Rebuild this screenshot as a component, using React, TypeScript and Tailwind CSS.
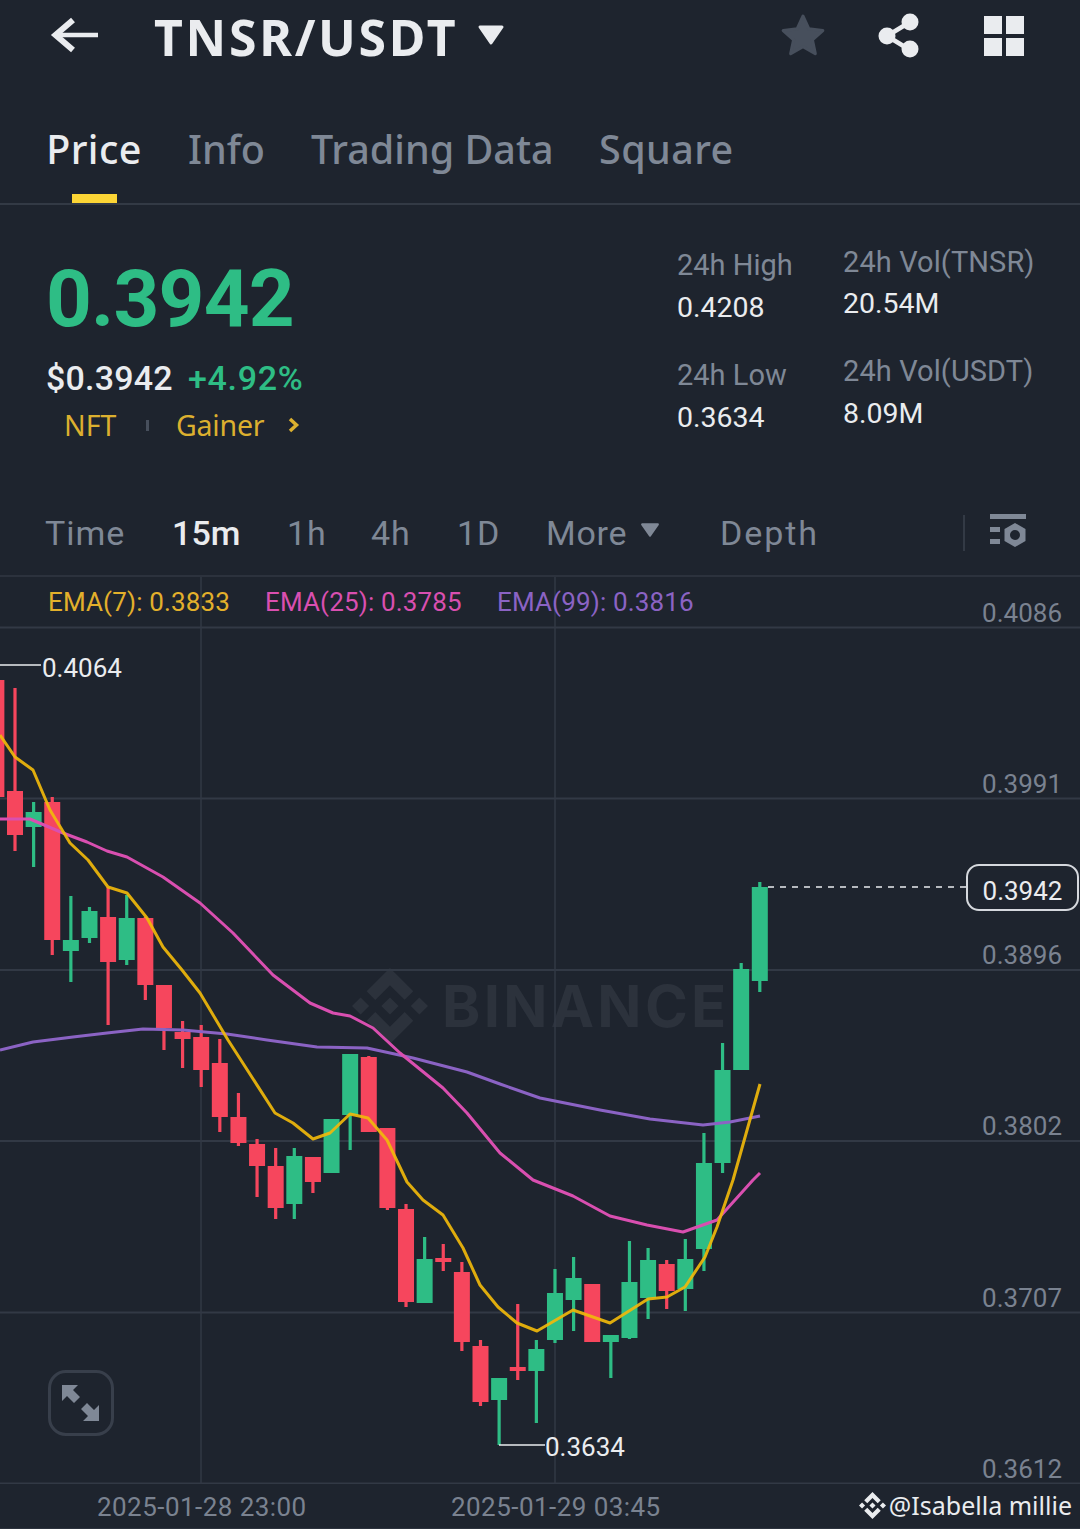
import React from "react";

const G = "#2ebd85";
const R = "#f6465d";
// [index, wickTop, wickBottom, bodyTop, bodyBottom, colour]
const candles: [number, number, number, number, number, string][] = [
  [-1, 678, 800, 680, 797, R],
  [0, 688, 851, 791, 835, R],
  [1, 802, 867, 812, 827, G],
  [2, 797, 955, 802, 940, R],
  [3, 896, 982, 940, 951, G],
  [4, 907, 943, 911, 938, G],
  [5, 887, 1025, 917, 962, R],
  [6, 895, 965, 918, 960, G],
  [7, 917, 1000, 918, 985, R],
  [8, 985, 1050, 985, 1028, R],
  [9, 1021, 1068, 1032, 1039, R],
  [10, 1025, 1087, 1037, 1070, R],
  [11, 1039, 1132, 1063, 1117, R],
  [12, 1093, 1146, 1117, 1143, R],
  [13, 1139, 1197, 1144, 1166, R],
  [14, 1148, 1219, 1166, 1208, R],
  [15, 1148, 1219, 1156, 1204, G],
  [16, 1157, 1193, 1157, 1182, R],
  [17, 1119, 1173, 1119, 1173, G],
  [18, 1054, 1150, 1054, 1115, G],
  [19, 1056, 1132, 1057, 1132, R],
  [20, 1128, 1210, 1128, 1208, R],
  [21, 1204, 1307, 1209, 1302, R],
  [22, 1237, 1303, 1259, 1303, G],
  [23, 1244, 1271, 1258, 1262, R],
  [24, 1262, 1351, 1272, 1342, R],
  [25, 1340, 1406, 1346, 1402, R],
  [26, 1378, 1445, 1378, 1400, G],
  [27, 1304, 1380, 1367, 1371, R],
  [28, 1340, 1423, 1349, 1371, G],
  [29, 1269, 1343, 1293, 1340, G],
  [30, 1257, 1331, 1278, 1300, G],
  [31, 1284, 1342, 1284, 1342, R],
  [32, 1335, 1378, 1335, 1342, G],
  [33, 1241, 1339, 1282, 1338, G],
  [34, 1248, 1319, 1260, 1298, G],
  [35, 1260, 1309, 1264, 1291, R],
  [36, 1239, 1311, 1259, 1289, G],
  [37, 1133, 1271, 1163, 1249, G],
  [38, 1043, 1173, 1070, 1163, G],
  [39, 963, 1070, 969, 1070, G],
  [40, 882, 992, 887, 981, G],
];

const ema7 =
  "0,735 15,757 33,770 50,810 70,843 88,860 108,887 127,893 147,918 163,947 182,970 200,993 228,1040 275,1113 293,1123 313,1139 330,1133 350,1114 368,1118 387,1140 407,1182 423,1200 443,1215 463,1248 480,1285 498,1307 517,1323 537,1331 573,1310 610,1323 648,1299 667,1297 685,1287 705,1257 717,1227 733,1180 760,1084";
const ema25 =
  "0,819 30,819 63,833 87,842 107,851 127,857 163,877 200,903 233,933 273,975 310,1003 333,1013 350,1016 373,1028 400,1053 443,1088 467,1113 500,1153 533,1180 573,1196 610,1216 647,1225 683,1232 717,1220 753,1180 760,1173";
const ema99 =
  "0,1050 33,1042 73,1037 107,1033 143,1029 183,1030 227,1034 267,1040 317,1047 367,1048 413,1058 467,1072 500,1084 540,1098 600,1110 650,1119 703,1125 730,1122 760,1116";

const BINANCE =
  "M16.624 13.9202l2.7175 2.7154-7.353 7.353-7.353-7.352 2.7175-2.7164 4.6355 4.6595 4.6356-4.6595zm4.6366-4.6366L24 12l-2.7154 2.7164L18.5682 12l2.6924-2.7164zm-9.272.001l2.7163 2.6914-2.7164 2.7174v-.001L9.2721 12l2.7164-2.7154zm-9.2722-.001L5.4088 12l-2.6914 2.6924L0 12l2.7164-2.7164zM11.9885.0115l7.353 7.329-2.7174 2.7154-4.6356-4.6356-4.6355 4.6595-2.7174-2.7154 7.353-7.353z";

function Caret({ className }: { className: string }) {
  return (
    <svg viewBox="0 0 28 22" className={className}>
      <path d="M3 3h22L14 19z" fill="currentColor" stroke="currentColor" strokeWidth="3" strokeLinejoin="round" />
    </svg>
  );
}

function Header() {
  return (
    <div className="flex h-[74px] items-center text-[#eaecef]">
      <svg viewBox="0 0 50 40" className="ml-[50px] h-[40px] w-[50px]">
        <path d="M23 3 5.500 18 23 33" fill="none" stroke="currentColor" strokeWidth="6" />
        <path d="M6 18h42" fill="none" stroke="currentColor" strokeWidth="4.500" />
      </svg>
      <span className="ml-[54px] w-[300px] text-[50px] font-bold leading-[60px] tracking-[2.700px] whitespace-nowrap font-['Noto_Sans',sans-serif]">
        TNSR/USDT
      </span>
      <Caret className="ml-[22px] mb-[4px] h-[22px] w-[30px]" />
      <svg viewBox="0 0 48 48" className="ml-[272px] mt-[-3px] h-[50px] w-[50px] text-[#474f5c]">
        <path
          d="M24 5l5.6 12.2 13.4 1.5-10 9 2.8 13.2L24 34.2 12.200 40.900 15 27.700l-10-9 13.400-1.500z"
          fill="currentColor"
          stroke="currentColor"
          strokeWidth="3"
          strokeLinejoin="round"
        />
      </svg>
      <svg viewBox="0 0 46 46" className="ml-[48px] mt-[-2px] h-[46px] w-[46px]">
        <path d="M11 23 34 9M11 23l23 14" stroke="currentColor" strokeWidth="4.500" fill="none" />
        <circle cx="11" cy="23" r="8.500" fill="currentColor" />
        <circle cx="34" cy="9" r="8.500" fill="currentColor" />
        <circle cx="34" cy="36" r="8.500" fill="currentColor" />
      </svg>
      <div className="ml-[62px] mt-[-2px] grid h-[40px] w-[40px] grid-cols-[18px_18px] grid-rows-[18px_18px] gap-[4px]">
        <div className="bg-[#eaecef]" />
        <div className="bg-[#eaecef]" />
        <div className="bg-[#eaecef]" />
        <div className="bg-[#eaecef]" />
      </div>
    </div>
  );
}

function Tabs() {
  return (
    <div className="flex h-[131px] items-end border-b-2 border-[#333a45] pl-[47px] text-[39.500px] leading-[48px] text-[#7f8896] font-['Noto_Sans',sans-serif]">
      <div className="flex w-[94px] flex-col items-center">
        <span className="mb-[21px] font-medium tracking-[0.400px] whitespace-nowrap text-[#eaecef]">Price</span>
        <div className="h-[9px] w-[45px] bg-[#fcd535]" />
      </div>
      <span className="mb-[30px] ml-[47px] w-[77px] whitespace-nowrap font-medium">Info</span>
      <span className="mb-[30px] ml-[46px] w-[242px] whitespace-nowrap font-medium">Trading Data</span>
      <span className="mb-[30px] ml-[46px] tracking-[0.400px] whitespace-nowrap font-medium">Square</span>
    </div>
  );
}

function Stats() {
  return (
    <div className="flex h-[285px] font-['Roboto',sans-serif]">
      <div className="w-[677px] pl-[46px]">
        <div className="mt-[54px] text-[80px] font-bold leading-[80px] tracking-[-0.800px] text-[#2ebd85]">0.3942</div>
        <div className="mt-[19px] flex items-center text-[34px] font-medium leading-[40px]">
          <span className="w-[142px] tracking-[0.200px] text-[#eaecef]">$0.3942</span>
          <span className="tracking-[0.700px] text-[#2ebd85]">+4.92%</span>
        </div>
        <div className="mt-[9px] flex items-center text-[28.500px] leading-[36px] text-[#dcb02f] font-['Noto_Sans',sans-serif]">
          <span className="ml-[18px] w-[82px]">NFT</span>
          <div className="h-[11px] w-[3px] bg-[#474f5c]" />
          <span className="ml-[27px] w-[112px] tracking-[-0.200px]">Gainer</span>
          <svg viewBox="0 0 12 16" className="h-[16px] w-[12px]">
            <path d="M2 2l6.500 6L2 14" fill="none" stroke="currentColor" strokeWidth="3.500" />
          </svg>
        </div>
      </div>
      <div className="w-[166px] pt-[40px] text-[29px] leading-[40px] text-[#eaecef]">
        <div className="text-[#7f8896]">24h High</div>
        <div className="mt-[3px] text-[28.500px]">0.4208</div>
        <div className="mt-[27px] text-[#7f8896]">24h Low</div>
        <div className="mt-[3px] text-[28.500px]">0.3634</div>
      </div>
      <div className="pt-[37px] text-[29px] leading-[40px] text-[#eaecef]">
        <div className="tracking-[0.100px] text-[#7f8896]">24h Vol(TNSR)</div>
        <div className="mt-[2px] text-[28.500px]">20.54M</div>
        <div className="mt-[27px] tracking-[0.100px] text-[#7f8896]">24h Vol(USDT)</div>
        <div className="mt-[3px] text-[28.500px]">8.09M</div>
      </div>
    </div>
  );
}

function Intervals() {
  return (
    <div className="flex h-[87px] items-center border-b-2 border-[#2c323d] pl-[45px] text-[34px] leading-[44px] text-[#7f8896] font-['Roboto',sans-serif]">
      <span className="w-[127px] tracking-[1px]">Time</span>
      <span className="w-[115px] font-medium tracking-[0.1px] text-[#eaecef]">15m</span>
      <span className="w-[84px] tracking-[1px]">1h</span>
      <span className="w-[86px] tracking-[1px]">4h</span>
      <span className="w-[89px] tracking-[1px]">1D</span>
      <span className="w-[94px] tracking-[0.7px]">More</span>
      <Caret className="h-[16px] w-[20px] mb-[6px]" />
      <span className="ml-[60px] w-[243px] tracking-[1.900px]">Depth</span>
      <div className="h-[36px] w-[2px] bg-[#333a45]" />
      <svg viewBox="0 0 38 38" className="ml-[24px] h-[38px] w-[38px] mb-[4px]">
        <path d="M1 2h36v5H1zM1 15h10v5H1zM1 27h10v5H1z" fill="currentColor" />
        <path fillRule="evenodd" d="M26 11l10.500 6v12L26 35l-10.500-6V17zM26 18a5 5 0 100 10 5 5 0 000-10z" fill="currentColor" />
      </svg>
    </div>
  );
}

function Chart() {
  return (
    <div className="relative h-[907px] overflow-hidden font-['Roboto',sans-serif]">
      {/* watermark */}
      <div className="absolute left-[352px] top-[391px] flex items-center text-[#2c323c]">
        <svg viewBox="0 0 24 24" className="h-[76px] w-[76px]">
          <path d={BINANCE} fill="currentColor" />
        </svg>
        <span className="ml-[14px] text-[58px] font-bold leading-[76px] tracking-[3.300px] font-['Inter',sans-serif]">BINANCE</span>
      </div>

      <svg viewBox="0 577 1080 907" className="absolute left-0 top-0 h-[907px] w-[1080px]">
        {[627.5, 798.5, 970, 1141, 1312.5, 1483.5].map((y) => (
          <line key={y} x1="0" x2="1080" y1={y} y2={y} stroke="#323945" strokeWidth="1.800" />
        ))}
        {[201, 555].map((x) => (
          <line key={x} x1={x} x2={x} y1="577" y2="1484" stroke="#323945" strokeWidth="1.500" />
        ))}
        {candles.map(([i, wt, wb, bt, bb, c]) => {
          const x = 15 + i * 18.62;
          return (
            <g key={i} fill={c}>
              <rect x={x - 1.6} y={wt} width="3.200" height={wb - wt} />
              <rect x={x - 8} y={bt} width="16" height={bb - bt} />
            </g>
          );
        })}
        <polyline points={ema99} fill="none" stroke="#8b63c4" strokeWidth="3" strokeLinejoin="round" />
        <polyline points={ema25} fill="none" stroke="#d94fb0" strokeWidth="3" strokeLinejoin="round" />
        <polyline points={ema7} fill="none" stroke="#f0b90b" strokeOpacity="0.92" strokeWidth="3" strokeLinejoin="round" />
        <line x1="0" x2="41" y1="665" y2="665" stroke="#eaecef" strokeWidth="1.500" />
        <path d="M499 1445h46" fill="none" stroke="#eaecef" strokeWidth="1.500" />
        <line x1="768" x2="967" y1="887" y2="887" stroke="#eaecef" strokeWidth="1.500" strokeDasharray="6 6" />
      </svg>

      {/* legend */}
      <div className="absolute left-[48px] top-[7px] flex text-[26px] leading-[36px] tracking-[0.150px] whitespace-nowrap">
        <span className="w-[217px] text-[#e3b02b]">EMA(7): 0.3833</span>
        <span className="w-[232px] text-[#d94fb0]">EMA(25): 0.3785</span>
        <span className="text-[#8b63c4]">EMA(99): 0.3816</span>
      </div>

      {/* price axis */}
      <span className="absolute right-[18px] top-[19px] text-[26px] leading-[34px] text-[#7a8290]">0.4086</span>
      <span className="absolute right-[18px] top-[190px] text-[26px] leading-[34px] text-[#7a8290]">0.3991</span>
      <span className="absolute right-[18px] top-[361px] text-[26px] leading-[34px] text-[#7a8290]">0.3896</span>
      <span className="absolute right-[18px] top-[532px] text-[26px] leading-[34px] text-[#7a8290]">0.3802</span>
      <span className="absolute right-[18px] top-[704px] text-[26px] leading-[34px] text-[#7a8290]">0.3707</span>
      <span className="absolute right-[18px] top-[875px] text-[26px] leading-[34px] text-[#7a8290]">0.3612</span>

      {/* last price */}
      <div className="absolute left-[966px] top-[287px] flex h-[47px] w-[113px] items-center justify-center rounded-[13px] border-2 border-[#d5d8dd] bg-[#1e242e] pt-[7px] text-[26px] leading-[34px] text-[#eaecef]">
        0.3942
      </div>

      {/* high / low */}
      <span className="absolute left-[42px] top-[74px] text-[26px] leading-[34px] text-[#eaecef]">0.4064</span>
      <span className="absolute left-[545px] top-[853px] text-[26px] leading-[34px] text-[#eaecef]">0.3634</span>

      {/* expand */}
      <div className="absolute left-[48px] top-[793px] flex h-[66px] w-[66px] items-center justify-center rounded-[18px] border-[3px] border-[#383f4b]">
        <svg viewBox="0 0 40 38" className="h-[38px] w-[40px] text-[#7f8896]">
          <path d="M1 1h16l-5 5 7 7-6 6-7-7-5 5zM38 37H22l5-5-7-7 6-6 7 7 5-5z" fill="currentColor" />
        </svg>
      </div>
    </div>
  );
}

function Axis() {
  return (
    <div className="relative h-[45px] border-b border-[#2c323d] font-['Roboto',sans-serif] text-[26px] leading-[46px] tracking-[0.450px] text-[#7a8290]">
      <div className="flex">
        <span className="ml-[97px] w-[354px] whitespace-nowrap">2025-01-28 23:00</span>
        <span className="whitespace-nowrap">2025-01-29 03:45</span>
      </div>
      <div className="absolute right-[8px] top-0 flex items-center tracking-normal text-[#eaecef]">
        <svg viewBox="0 0 24 24" className="h-[27px] w-[27px]">
          <path d={BINANCE} fill="currentColor" />
        </svg>
        <span className="ml-[3px] text-[25px] leading-[42px] whitespace-nowrap font-['Noto_Sans',sans-serif]">@Isabella millie</span>
      </div>
    </div>
  );
}

export default function App() {
  return (
    <div className="h-[1529px] w-[1080px] overflow-hidden bg-[#1e242e]">
      <Header />
      <Tabs />
      <Stats />
      <Intervals />
      <Chart />
      <Axis />
    </div>
  );
}
